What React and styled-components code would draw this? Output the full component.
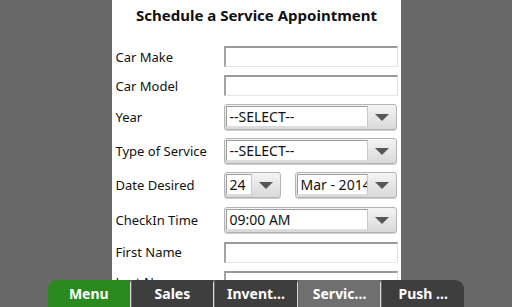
import React from 'react';
import styled, { createGlobalStyle } from 'styled-components';

const GlobalStyle = createGlobalStyle`
  html, body {
    margin: 0;
    padding: 0;
    background: #686868;
    font-family: "Noto Sans", "Open Sans", "DejaVu Sans", sans-serif;
  }
`;

const Screen = styled.div`
  width: 512px;
  height: 307px;
  display: flex;
  flex-direction: column;
  align-items: center;
  overflow: hidden;
`;

const Panel = styled.div`
  width: 289px;
  flex: 1;
  min-height: 0;
  background: #fff;
  overflow: hidden;
  box-sizing: border-box;
  padding: 0 3px 0 4px;
`;

const Title = styled.h1`
  margin: 0;
  height: 46px;
  padding-top: 4px;
  box-sizing: border-box;
  text-align: center;
  font-size: 15px;
  font-weight: 700;
  color: #111;
  line-height: 22px;
`;

const Form = styled.div`
  display: flex;
  flex-direction: column;
  gap: 8px;
`;

const Row = styled.div`
  display: flex;
  align-items: center;
  height: ${p => p.h}px;
`;

const Label = styled.div`
  width: 108px;
  flex: none;
  font-size: 13px;
  color: #111;
  white-space: nowrap;
`;

const TextBox = styled.div`
  width: 174px;
  height: 21px;
  box-sizing: border-box;
  background: #fff;
  border-top: 2px solid #9a9a9a;
  border-left: 2px solid #a4a4a4;
  border-right: 1px solid #e2e2e2;
  border-bottom: 1px solid #e6e6e6;
`;

const Select = styled.div`
  width: ${p => p.w}px;
  height: 26px;
  box-sizing: border-box;
  display: flex;
  border: 1px solid #b4b4b4;
  border-radius: 3px;
  background: linear-gradient(#f4f4f4, #d9d9d9);
  box-shadow: 0 1px 0 #cfcfcf;
  margin-left: ${p => p.ml || 0}px;
  padding: 1px 0 2px 1px;
`;

const SelectValue = styled.div`
  flex: 1;
  min-width: 0;
  background: #fff;
  border-top: 1px solid #9f9f9f;
  border-left: 1px solid #9f9f9f;
  border-right: 1px solid #c8c8c8;
  border-bottom: 1px solid #dedede;
  font-size: 14px;
  color: #111;
  line-height: 20px;
  padding-left: 3px;
  white-space: nowrap;
  overflow: hidden;
`;

const Arrow = styled.div`
  width: 28px;
  flex: none;
  display: flex;
  align-items: center;
  justify-content: center;
  &::after {
    content: "";
    border-left: 7px solid transparent;
    border-right: 7px solid transparent;
    border-top: 7px solid #575757;
    margin-top: 2px;
  }
`;

const TabBar = styled.div`
  width: 416px;
  height: 27px;
  flex: none;
  display: flex;
  gap: 2px;
`;

const Tab = styled.div`
  flex: 1;
  display: flex;
  align-items: center;
  justify-content: center;
  background: ${p => p.bg};
  color: #fff;
  font-size: 14px;
  font-weight: 700;
  position: relative;
  &:first-child { border-top-left-radius: 9px; }
  &:last-child { border-top-right-radius: 9px; }
  &:not(:first-child)::before {
    content: "";
    position: absolute;
    left: -2px;
    top: 2px;
    bottom: 0;
    width: 1px;
    background: #d8d8d8;
  }
`;

const Dropdown = ({ w, ml, value }) => (
  <Select w={w} ml={ml}>
    <SelectValue>{value}</SelectValue>
    <Arrow />
  </Select>
);

const tabs = [
  { label: 'Menu', bg: '#2b8a1e' },
  { label: 'Sales', bg: '#3e3e3e' },
  { label: 'Invent...', bg: '#3e3e3e' },
  { label: 'Servic...', bg: '#6f6f6f' },
  { label: 'Push ...', bg: '#3e3e3e' },
];

const App = () => (
  <Screen>
    <GlobalStyle />
    <Panel>
      <Title>Schedule a Service Appointment</Title>
      <Form>
        <Row h={21}><Label>Car Make</Label><TextBox /></Row>
        <Row h={21}><Label>Car Model</Label><TextBox /></Row>
        <Row h={26}><Label>Year</Label><Dropdown w={173} value="--SELECT--" /></Row>
        <Row h={26}><Label>Type of Service</Label><Dropdown w={173} value="--SELECT--" /></Row>
        <Row h={26}>
          <Label>Date Desired</Label>
          <Dropdown w={57} value="24" />
          <Dropdown w={102} ml={14} value="Mar - 2014" />
        </Row>
        <Row h={27}><Label>CheckIn Time</Label><Dropdown w={173} value="09:00 AM" /></Row>
        <Row h={22}><Label>First Name</Label><TextBox /></Row>
        <Row h={21}><Label>Last Name</Label><TextBox /></Row>
      </Form>
    </Panel>
    <TabBar>
      {tabs.map(t => (
        <Tab key={t.label} bg={t.bg}>{t.label}</Tab>
      ))}
    </TabBar>
  </Screen>
);

export default App;
